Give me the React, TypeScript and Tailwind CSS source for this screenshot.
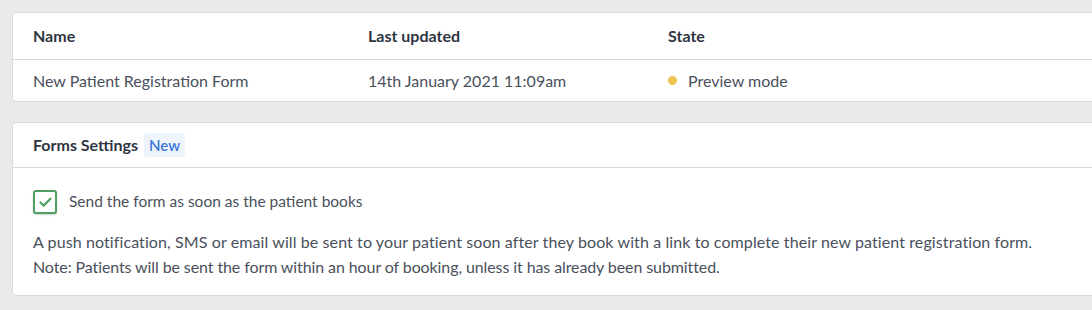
import { Check } from "lucide-react"

export default function App() {
  return (
    <div className="min-h-[310px] w-[1092px] overflow-hidden bg-[#e9eaec] pl-3 pt-3 font-['Lato','Liberation_Sans',sans-serif] text-[16px]">
      <div className="w-[1100px]">
        {/* Forms table */}
        <div className="rounded border border-[#d9dadd] bg-white">
          <div className="flex h-[47px] items-center border-b border-[#d9dadd] px-5 font-bold text-[#2f3542]">
            <div className="w-[335px]">Name</div>
            <div className="w-[300px]">Last updated</div>
            <div>State</div>
          </div>
          <div className="flex h-[41px] items-center px-5 text-[#4a505c]">
            <div className="w-[335px]">New Patient Registration Form</div>
            <div className="w-[300px]">14th January 2021 11:09am</div>
            <div className="flex items-center">
              <span className="mr-[11px] h-[9px] w-[9px] rounded-full bg-[#f0c350]"></span>
              Preview mode
            </div>
          </div>
        </div>

        {/* Settings card */}
        <div className="mt-[20px] rounded border border-[#d9dadd] bg-white">
          <div className="flex h-[45px] items-center gap-[6px] border-b border-[#d9dadd] px-5">
            <span className="font-bold text-[#2f3542]">Forms Settings</span>
            <span className="rounded bg-[#eef4fb] px-[5px] py-[1px] text-[15px] font-semibold text-[#3b78d6]">New</span>
          </div>
          <div className="px-5 pb-[16px] pt-[22px] text-[#4a505c]">
            <label className="flex items-center gap-[12px]">
              <span className="flex h-[24px] w-[24px] items-center justify-center rounded-[3px] border-2 border-[#4f9f63] bg-white shadow-[0_1px_2px_rgba(0,0,0,0.2)]">
                <Check className="h-[15px] w-[15px] text-[#4f9f63]" strokeWidth={3.5} />
              </span>
              <span className="text-[15.5px]">Send the form as soon as the patient books</span>
            </label>
            <div className="mt-[15px] leading-[25px]">
              <p className="tracking-[0.1px]">A push notification, SMS or email will be sent to your patient soon after they book with a link to complete their new patient registration form.</p>
              <p className="tracking-[-0.1px]">Note: Patients will be sent the form within an hour of booking, unless it has already been submitted.</p>
            </div>
          </div>
        </div>
      </div>
    </div>
  )
}
